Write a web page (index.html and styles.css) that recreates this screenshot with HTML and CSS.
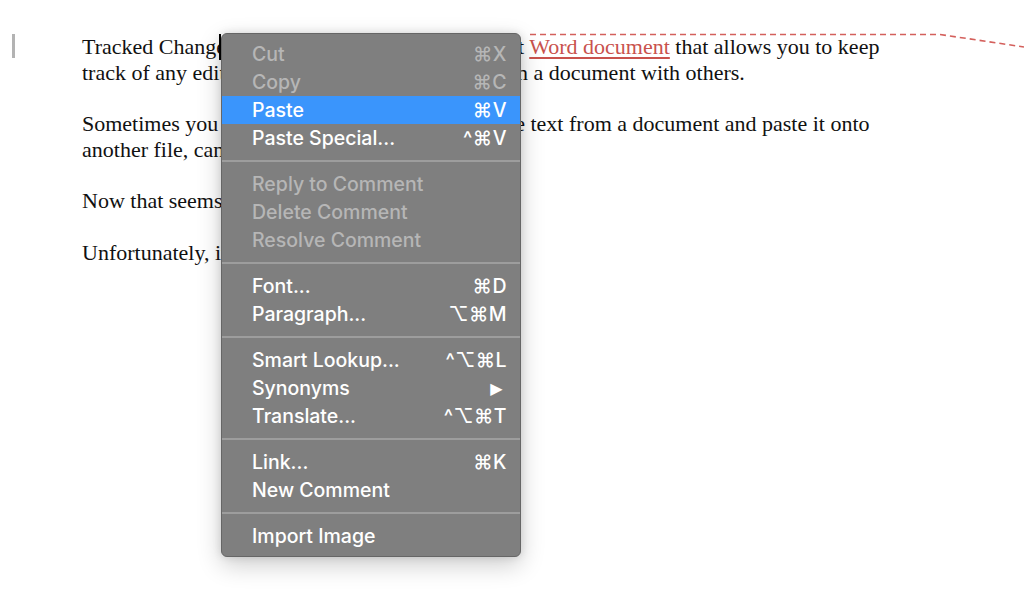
FILE: index.html
```html
<!DOCTYPE html>
<html>
<head>
<meta charset="utf-8">
<link rel="stylesheet" href="styles.css">
</head>
<body>
<div class="page">
  <div class="change-bar"></div>
  <svg class="balloon-line" width="1024" height="60" viewBox="0 0 1024 60"><polyline points="530,34.5 940,34.5 1024,47" fill="none" stroke="#d4605c" stroke-width="1.6" stroke-dasharray="6 4"/></svg>
  <div class="doc">
    <p>Tracked Changes is a helpful feature on Microsoft <span class="ins">Word document</span> that allows you to keep track of any edits you made when collaborating on a document with others.</p>
    <p>Sometimes you may just need to copy some of the text from a document and paste it onto another file, can you do that?</p>
    <p>Now that seems simple.</p>
    <p>Unfortunately, it is not.</p>
  </div>
  <div class="menu">
    <div class="item disabled"><span>Cut</span><span class="key">⌘X</span></div>
    <div class="item disabled"><span>Copy</span><span class="key">⌘C</span></div>
    <div class="item active"><span>Paste</span><span class="key">⌘V</span></div>
    <div class="item"><span>Paste Special...</span><span class="key">^⌘V</span></div>
    <div class="sep"></div>
    <div class="item disabled"><span>Reply to Comment</span></div>
    <div class="item disabled"><span>Delete Comment</span></div>
    <div class="item disabled"><span>Resolve Comment</span></div>
    <div class="sep"></div>
    <div class="item"><span>Font...</span><span class="key">⌘D</span></div>
    <div class="item"><span>Paragraph...</span><span class="key">⌥⌘M</span></div>
    <div class="sep"></div>
    <div class="item"><span>Smart Lookup...</span><span class="key">^⌥⌘L</span></div>
    <div class="item"><span>Synonyms</span><span class="key arrow">▶</span></div>
    <div class="item"><span>Translate...</span><span class="key">^⌥⌘T</span></div>
    <div class="sep"></div>
    <div class="item"><span>Link...</span><span class="key">⌘K</span></div>
    <div class="item"><span>New Comment</span></div>
    <div class="sep"></div>
    <div class="item"><span>Import Image</span></div>
  </div>
</div>
</body>
</html>
```

FILE: styles.css
```css
html, body {
  margin: 0;
  padding: 0;
  background: #ffffff;
}
.page {
  position: relative;
  width: 1024px;
  height: 599px;
  overflow: hidden;
}
.change-bar {
  position: absolute;
  left: 12px;
  top: 34px;
  width: 3px;
  height: 24px;
  background: #b3b3b3;
}
.balloon-line {
  position: absolute;
  left: 0;
  top: 0;
}
.doc {
  padding: 34px 0 0 82px;
  width: 815px;
  font-family: "Liberation Serif", "Times New Roman", serif;
  font-size: 22px;
  line-height: 25.7px;
  color: #111;
}
.doc p {
  margin: 0 0 25.7px 0;
}
.ins {
  color: #c9524d;
  text-decoration: underline;
  text-decoration-color: #c9524d;
  text-underline-offset: 3px;
}
.menu {
  position: absolute;
  left: 221px;
  top: 33px;
  width: 300px;
  box-sizing: border-box;
  padding: 6px 0;
  background: #7f7f7f;
  border: 1px solid #666;
  border-radius: 6px;
  box-shadow: 0 8px 24px rgba(0, 0, 0, 0.2), 0 0 8px rgba(0, 0, 0, 0.12);
  font-family: Inter, "Noto Sans", sans-serif;
  font-size: 19.5px;
  font-weight: 500;
  color: #ffffff;
}
.menu::before {
  content: "";
  position: absolute;
  left: -3px;
  top: 0;
  width: 2px;
  height: 26px;
  background: #000;
}
.item {
  display: flex;
  justify-content: space-between;
  align-items: center;
  height: 28px;
  padding: 0 13px 0 30px;
}
.item.disabled {
  color: #b6b6b6;
}
.item.active {
  background: #3a95fc;
}
.key {
  font-family: Inter, "DejaVu Sans", sans-serif;
  letter-spacing: 0.5px;
}
.key.arrow {
  font-family: "DejaVu Sans", sans-serif;
  font-size: 16px;
  padding-right: 4px;
}
.sep {
  height: 18px;
  display: flex;
  align-items: center;
}
.sep::after {
  content: "";
  display: block;
  width: 100%;
  height: 2px;
  background: #9d9d9d;
}
```
